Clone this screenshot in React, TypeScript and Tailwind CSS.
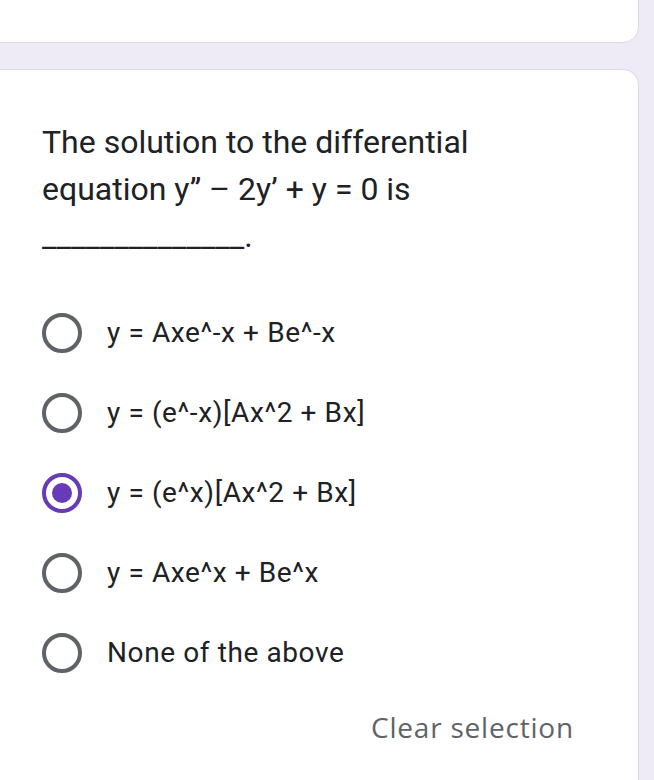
const options = [
  "y = Axe^-x + Be^-x",
  "y = (e^-x)[Ax^2 + Bx]",
  "y = (e^x)[Ax^2 + Bx]",
  "y = Axe^x + Be^x",
  "None of the above",
];

function Radio({ checked }: { checked: boolean }) {
  return (
    <div
      className={
        checked
          ? "w-10 h-10 rounded-full border-4 border-[#673ab7] flex items-center justify-center shrink-0"
          : "w-10 h-10 rounded-full border-4 border-[#5f6368] shrink-0"
      }
    >
      {checked && <div className="w-5 h-5 rounded-full bg-[#673ab7]" />}
    </div>
  );
}

export default function App() {
  const selected = 2;

  return (
    <div className="min-h-screen h-[780px] bg-[#eeebf7] overflow-hidden flex flex-col gap-[26px]">
      {/* previous question card, only its bottom shows */}
      <div className="-ml-5 mr-[15px] -mt-5 h-[63px] bg-white border border-[#dadce0] rounded-[16px] shrink-0" />

      {/* current question */}
      <div
        className="-ml-5 mr-[15px] flex-1 bg-white border border-b-0 border-[#dadce0] rounded-t-[16px] pl-[61px] pt-[49px]"
        style={{ fontFamily: "Roboto, 'Liberation Sans', sans-serif" }}
      >
        <p className="text-[32px] leading-[47px] text-[#202124] pr-6">
          The solution to the differential
          <br />
          equation y” – 2y’ + y = 0 is
          <br />
          ______________.
        </p>

        <div className="mt-[33px] flex flex-col">
          {options.map((opt, i) => (
            <div key={opt} className="h-20 flex items-center gap-[25px]">
              <Radio checked={i === selected} />
              <span className="text-[28px] tracking-[0.6px] text-[#202124]">{opt}</span>
            </div>
          ))}
        </div>

        <div className="flex justify-end pr-[64px] pt-[13px]">
          <button
            className="text-[28px] font-medium text-[#5f6368] tracking-[0.8px]"
            style={{ fontFamily: "'Open Sans', Lato, sans-serif" }}
          >
            Clear selection
          </button>
        </div>
      </div>
    </div>
  );
}
